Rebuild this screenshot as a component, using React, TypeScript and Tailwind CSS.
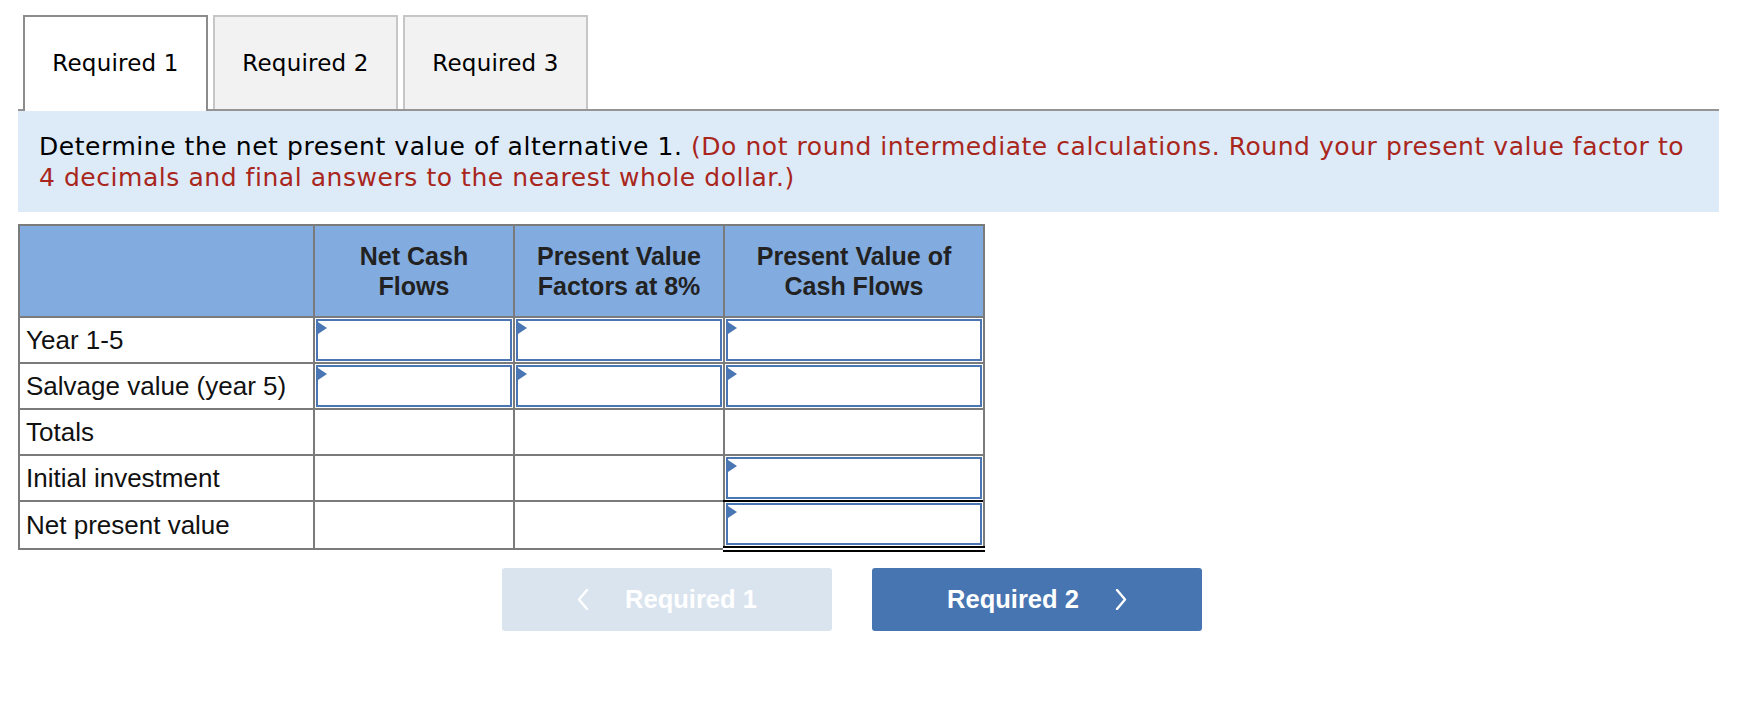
import React from "react";

const Flag = () => (
  <span className="absolute left-0 top-[1px] h-0 w-0 border-y-[6px] border-l-[9px] border-y-transparent border-l-[#4a77b4]" />
);

const InputBox = ({ extra = "" }: { extra?: string }) => (
  <div className={`relative h-[42px] w-full border-2 border-[#4a77b4] bg-white ${extra}`}>
    <Flag />
  </div>
);

const Chevron = ({ dir }: { dir: "left" | "right" }) => (
  <svg width="12" height="21" viewBox="0 0 12 21" fill="none">
    {dir === "left" ? (
      <polyline points="10,1 2,10.5 10,20" stroke="white" strokeWidth="2.4" strokeLinecap="round" strokeLinejoin="round" />
    ) : (
      <polyline points="2,1 10,10.5 2,20" stroke="white" strokeWidth="2.4" strokeLinecap="round" strokeLinejoin="round" />
    )}
  </svg>
);

export default function App() {
  const cell = "border-2 border-[#7b7b7b]";
  const label = `${cell} h-[46px] pl-[6px] text-[26px] text-[#111] font-normal text-left`;
  const inputCell = `${cell} h-[46px] p-[1px]`;
  const emptyCell = `${cell} h-[46px]`;
  const head = `${cell} h-[92px] text-center text-[25px] font-bold leading-[30px] text-[#222]`;
  return (
    <div className="h-[724px] w-[1762px] bg-white pl-[18px] pt-[15px]">
      <div className="w-[1701px]">
        <div
          className="flex items-end gap-[5px] border-b-2 border-[#959595] pl-[5px]"
          style={{ fontFamily: '"DejaVu Sans", Verdana, sans-serif' }}
        >
          <div className="-mb-[2px] flex h-[96px] w-[185px] items-center justify-center border-2 border-b-0 border-[#8c8c8c] bg-white pb-[2px] text-[23px] tracking-[0.2px] text-black">
            Required 1
          </div>
          <div className="flex h-[94px] w-[185px] items-center justify-center border-2 border-b-0 border-[#c6c6c6] bg-[#f2f2f2] text-[23px] tracking-[0.2px] text-black">
            Required 2
          </div>
          <div className="flex h-[94px] w-[185px] items-center justify-center border-2 border-b-0 border-[#c6c6c6] bg-[#f2f2f2] text-[23px] tracking-[0.2px] text-black">
            Required 3
          </div>
        </div>
        <div
          className="h-[101px] bg-[#ddebf8] px-[21px] pt-[20px] text-[25px] leading-[31px] tracking-[0.55px] text-black"
          style={{ fontFamily: '"DejaVu Sans", Verdana, sans-serif' }}
        >
          <p className="whitespace-nowrap">
            Determine the net present value of alternative 1.{" "}
            <span className="text-[#a9261d]">
              (Do not round intermediate calculations. Round your present value factor to
            </span>
          </p>
          <p className="whitespace-nowrap text-[#a9261d]">
            4 decimals and final answers to the nearest whole dollar.)
          </p>
        </div>
      </div>

      <table
        className="mt-[12px] w-[965px] table-fixed border-collapse"
        style={{ fontFamily: '"Liberation Sans", Arial, Helvetica, sans-serif' }}
      >
        <colgroup>
          <col className="w-[295px]" />
          <col className="w-[200px]" />
          <col className="w-[210px]" />
          <col className="w-[260px]" />
        </colgroup>
        <thead>
          <tr className="bg-[#82abdf]">
            <th className={`${cell} h-[92px]`}></th>
            <th className={head}>
              Net Cash
              <br />
              Flows
            </th>
            <th className={head}>
              Present Value
              <br />
              Factors at 8%
            </th>
            <th className={head}>
              Present Value of
              <br />
              Cash Flows
            </th>
          </tr>
        </thead>
        <tbody>
          <tr>
            <td className={label}>Year 1-5</td>
            <td className={inputCell}><InputBox /></td>
            <td className={inputCell}><InputBox /></td>
            <td className={inputCell}><InputBox /></td>
          </tr>
          <tr>
            <td className={label}>Salvage value (year 5)</td>
            <td className={inputCell}><InputBox /></td>
            <td className={inputCell}><InputBox /></td>
            <td className={inputCell}><InputBox /></td>
          </tr>
          <tr>
            <td className={label}>Totals</td>
            <td className={emptyCell}></td>
            <td className={emptyCell}></td>
            <td className={emptyCell}></td>
          </tr>
          <tr>
            <td className={label}>Initial investment</td>
            <td className={emptyCell}></td>
            <td className={emptyCell}></td>
            <td className={`${inputCell} border-b-black`}><InputBox /></td>
          </tr>
          <tr>
            <td className={label}>Net present value</td>
            <td className={emptyCell}></td>
            <td className={emptyCell}></td>
            <td className={`${inputCell} border-t-black border-b-[6px] border-b-black border-double`}>
              <InputBox />
            </td>
          </tr>
        </tbody>
      </table>

      <div
        className="ml-[484px] mt-[16px] flex gap-[40px]"
        style={{ fontFamily: '"Liberation Sans", Arial, Helvetica, sans-serif' }}
      >
        <div className="flex h-[63px] w-[330px] items-center justify-center gap-[36px] rounded-[3px] bg-[#dae4ef] text-[25.5px] font-bold text-white">
          <Chevron dir="left" />
          <span>Required 1</span>
        </div>
        <div className="flex h-[63px] w-[330px] items-center justify-center gap-[36px] rounded-[3px] bg-[#4775b2] text-[25.5px] font-bold text-white">
          <span>Required 2</span>
          <Chevron dir="right" />
        </div>
      </div>
    </div>
  );
}
